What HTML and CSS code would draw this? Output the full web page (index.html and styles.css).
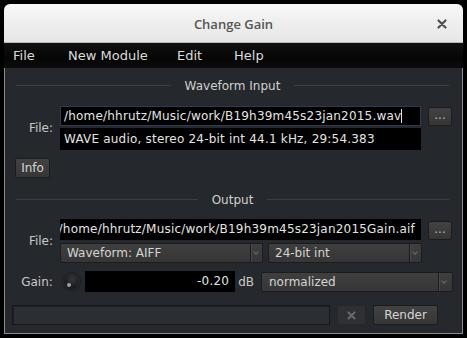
FILE: index.html
```html
<!doctype html>
<html lang="en">
<head>
    <meta charset="UTF-8">
    <title>Change Gain</title>
    <link rel="stylesheet" href="styles.css">
</head>
<body>
<div class="window">
    <div class="titlebar">
        <span class="title">Change Gain</span>
        <svg class="close" width="10" height="10" viewBox="0 0 10 10">
            <path d="M1.5 1.5 L8.5 8.5 M8.5 1.5 L1.5 8.5" stroke="#505050" stroke-width="2.2" stroke-linecap="round"/>
        </svg>
    </div>

    <div class="menubar">
        <span class="m-file">File</span>
        <span class="m-module">New Module</span>
        <span class="m-edit">Edit</span>
        <span>Help</span>
    </div>

    <div class="content">
        <div class="section-head"><span>Waveform Input</span></div>

        <div class="file-grid">
            <label class="file-label">File:</label>
            <div class="field focus">/home/hhrutz/Music/work/B19h39m45s23jan2015.wav<i class="caret"></i></div>
            <button class="btn dots">...</button>
            <div class="field info-line">WAVE audio, stereo 24-bit int 44.1 kHz, 29:54.383</div>
        </div>

        <button class="btn info">Info</button>

        <div class="section-head out"><span>Output</span></div>

        <div class="file-grid">
            <label class="file-label">File:</label>
            <div class="field scrolled"><span>/home/hhrutz/Music/work/B19h39m45s23jan2015Gain.aif</span></div>
            <button class="btn dots out-dots">...</button>
            <div class="select-row">
                <div class="select wide">Waveform: AIFF<i class="arrow"></i></div>
                <div class="select">24-bit int<i class="arrow"></i></div>
            </div>
        </div>

        <div class="gain-row">
            <label class="gain-label">Gain:</label>
            <div class="knob"><i class="dot"></i></div>
            <div class="field number">-0.20</div>
            <span class="unit">dB</span>
            <div class="select norm">normalized<i class="arrow"></i></div>
        </div>

        <div class="bottom-row">
            <div class="progress"></div>
            <button class="btn cancel">
                <svg width="9" height="9" viewBox="0 0 9 9">
                    <path d="M1.5 1.5 L7.5 7.5 M7.5 1.5 L1.5 7.5" stroke="#6a6a6a" stroke-width="2" stroke-linecap="round"/>
                </svg>
            </button>
            <button class="btn render">Render</button>
        </div>
    </div>
</div>
</body>
</html>
```

FILE: styles.css
```css
html, body {
    margin: 0;
    background: #000;
}

body {
    padding: 4px;
    font-family: "DejaVu Sans", sans-serif;
    font-size: 12px;
}

.window {
    width: 459px;
    background: #25282d;
    border-radius: 6px 6px 0 0;
}

.titlebar {
    height: 38px;
    position: relative;
    display: flex;
    align-items: center;
    justify-content: center;
    background: linear-gradient(#f7f7f7, #e6e6e6);
    border-bottom: 1px solid #b8b8b8;
    border-radius: 6px 6px 0 0;

    .title {
        font-family: "Open Sans", sans-serif;
        font-weight: 600;
        font-size: 13px;
        color: #555;
        margin-top: 1px;
    }

    .close {
        position: absolute;
        right: 16px;
        top: 15px;
    }
}

.menubar {
    height: 25px;
    display: flex;
    align-items: center;
    padding-left: 9px;
    background: linear-gradient(#111, #050505 60%, #0c0c0c);
    color: #dcdcdc;
    font-size: 13px;

    .m-file { width: 55px; }
    .m-module { width: 109px; }
    .m-edit { width: 57px; }
}

.content {
    border: 1px solid #8a8c90;
    border-top: none;
    padding: 10px 9px 8px 10px;
}

.section-head {
    display: flex;
    align-items: center;
    gap: 14px;
    height: 15px;
    margin: 0 4px 13px 1px;
    color: #d0d0d0;

    &::before, &::after {
        content: "";
        flex: 1;
        height: 1px;
        background: #3b3f45;
    }

    &.out {
        margin-top: 14px;
        margin-bottom: 12px;
    }
}

.file-grid {
    display: grid;
    grid-template-columns: 38px 361px 24px;
    column-gap: 7px;
    row-gap: 2px;
}

.file-label {
    grid-row: 1 / 3;
    align-self: center;
    text-align: right;
    color: #c8c8c8;
}

.field {
    box-sizing: border-box;
    background: #000;
    color: #e4e4e4;
    height: 20px;
    line-height: 20px;
    padding: 0 4px;
    letter-spacing: 0.2px;
    white-space: nowrap;
    overflow: hidden;

    &.focus {
        border: 1px solid #2f3a58;
        line-height: 18px;
        padding: 0 3px;
    }

    &.info-line {
        grid-column: 2;
        height: 22px;
        line-height: 22px;
    }

    &.scrolled {
        height: 21px;
        line-height: 21px;
        display: flex;
        justify-content: flex-end;
        padding-right: 6px;
    }
}

.caret {
    display: inline-block;
    width: 1px;
    height: 14px;
    background: #e4e4e4;
    vertical-align: -3px;
}

.btn {
    box-sizing: border-box;
    font-family: "DejaVu Sans", sans-serif;
    font-size: 12px;
    color: #d6d6d6;
    background: linear-gradient(#424242, #363636);
    border: 1px solid #1b1b1b;
    border-radius: 2px;
    padding: 0;
    height: 20px;

    &.dots {
        height: 19px;
        margin-top: 1px;
        line-height: 12px;
        padding-bottom: 4px;
        color: #bcbcbc;
    }

    &.out-dots {
        margin-top: 2px;
    }

    &.info {
        display: block;
        width: 35px;
        margin-top: 8px;
        margin-left: 0;
    }
}

.select-row {
    grid-column: 2;
    display: flex;
    gap: 5px;
    width: 362px;
    margin-top: 1px;
}

.select {
    box-sizing: border-box;
    position: relative;
    flex: 1;
    height: 20px;
    line-height: 18px;
    padding-left: 6px;
    color: #d4d4d4;
    background: linear-gradient(#3f3f3f, #363636);
    border: 1px solid #1c1c1c;
    border-radius: 2px;

    &.wide {
        flex: 0 0 203px;
    }

    .arrow {
        position: absolute;
        right: 0;
        top: 0;
        width: 11px;
        height: 18px;
        border-left: 1px solid #1a1a1a;
        box-shadow: inset 1px 0 0 #4a4a4a;

        &::after {
            content: "";
            position: absolute;
            left: 3px;
            top: 6px;
            width: 3px;
            height: 3px;
            border-right: 1px solid #6b6b6b;
            border-bottom: 1px solid #6b6b6b;
            transform: rotate(45deg);
        }
    }
}

.gain-row {
    display: flex;
    align-items: center;
    height: 21px;
    margin-top: 8px;

    .gain-label {
        width: 38px;
        text-align: right;
        color: #c8c8c8;
    }

    .knob {
        position: relative;
        width: 17px;
        height: 17px;
        margin-left: 10px;
        border-radius: 50%;
        background: radial-gradient(circle at 55% 35%, #34363a, #141517 80%);
        border: 1px solid #2a2c30;
        box-shadow: 0 0 0 1px #1a1b1e;
        box-sizing: border-box;

        .dot {
            position: absolute;
            left: 3px;
            top: 9px;
            width: 4px;
            height: 4px;
            border-radius: 50%;
            background: #a0a0a0;
        }
    }

    .number {
        width: 151px;
        height: 21px;
        line-height: 21px;
        margin-left: 5px;
        text-align: right;
        padding-right: 6px;
    }

    .unit {
        margin-left: 3px;
        color: #c8c8c8;
    }

    .norm {
        flex: 0 0 192px;
        margin-left: 7px;
        height: 20px;
        padding-left: 7px;

        .arrow {
            width: 13px;
        }
    }
}

.bottom-row {
    display: flex;
    align-items: center;
    margin-top: 13px;
    margin-left: -3px;
    height: 20px;

    .progress {
        box-sizing: border-box;
        width: 318px;
        height: 20px;
        background: #2b2e33;
        border: 1px solid #15171a;
        box-shadow: inset 1px 1px 0 #1e2024;
    }

    .cancel {
        width: 29px;
        margin-left: 7px;
        background: #2e3034;
        border-color: #25272b;
        display: flex;
        align-items: center;
        justify-content: center;
    }

    .render {
        width: 65px;
        margin-left: 7px;
    }
}
```
